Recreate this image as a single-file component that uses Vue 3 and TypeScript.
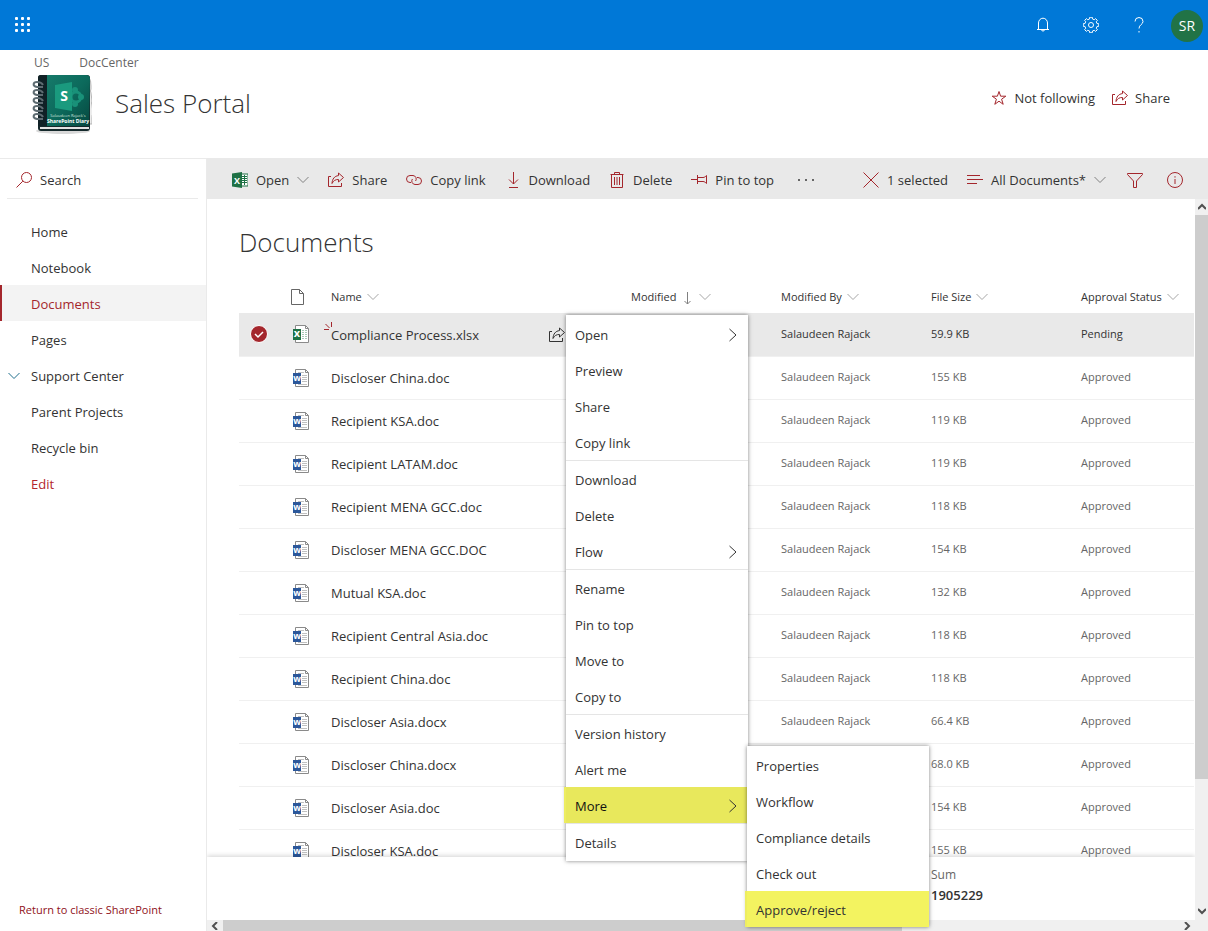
<script setup lang="ts">
import { ref } from 'vue'

interface DocRow {
  name: string
  kind: 'xls' | 'doc'
  author: string
  size: string
  status: string
  selected?: boolean
}

interface MenuItem {
  label: string
  submenu?: boolean
  marked?: boolean
}

interface Command {
  label: string
  icon: string
}

const icons: Record<string, string> = {
  share: 'M10.5 1L15.5 5.5L10.5 10V7.5C7.5 7.4 5.5 8.5 4 11.5C4.2 7 6.5 4 10.5 3.6ZM3 4.5H.5V14.5H13.5V11',
  link: 'M5 10.5H4A3.5 3.5 0 0 1 4 3.5H7A3.5 3.5 0 0 1 9.6 9M11 5.5H12A3.5 3.5 0 0 1 12 12.5H9A3.5 3.5 0 0 1 6.4 7',
  download: 'M8.5 0V12M4 7.5L8.5 12L13 7.5M4 15.5H13',
  trash: 'M1.5 2.5H14.5M5.5 2.5V.5H10.5V2.5M2.5 2.5V15.5H13.5V2.5M5.5 5V13M8 5V13M10.5 5V13',
  pin: 'M0 7.5H6M6.5 3V12M6.5 5.5H12C13.5 5.5 14.5 4.5 15.5 3.5V11.5C14.5 10.5 13.5 9.5 12 9.5H6.5',
  close: 'M.5 .5L15.5 15.5M15.5 .5L.5 15.5',
  list: 'M0 3.5H13M0 7.5H16M0 11.5H10',
  filter: 'M.5 1.5H15.5V2.5L9.5 9V15.5H6.5V9L.5 2.5Z',
  info: 'M8 .5A7.5 7.5 0 1 1 8 15.5A7.5 7.5 0 1 1 8 .5ZM8 7V12M8 4.2V5.6',
  star: 'M8 1.5L9.6 6.2H14.8L10.6 9.2L12.2 14.3L8 11.2L3.8 14.3L5.4 9.2L1.2 6.2H6.4Z',
  search: 'M10.5 .5A5 5 0 1 1 10.5 10.5A5 5 0 1 1 10.5 .5ZM6.8 9.2L.5 15.5',
  bell: 'M2 12.5H14M3.5 12.5V6A4.5 4.8 0 0 1 12.5 6V12.5M6.3 12.8A1.8 1.8 0 0 0 9.7 12.8',
  help: 'M4 4.5A4 4 0 0 1 12 4.5C12 7.5 8 7.6 8 11.5M8 14V15.5',
  file: 'M.5 .5H8.5L12.5 4.5V15.5H.5ZM8.5 .5V4.5H12.5',
  sort: 'M4.5 1V13M1.5 10L4.5 13L7.5 10',
}

function gearPath(teeth: number, outer: number, inner: number): string {
  const points: string[] = []
  const step = (Math.PI * 2) / teeth
  for (let i = 0; i < teeth; i++) {
    const corners: [number, number][] = [[-0.3, inner], [-0.2, outer], [0.2, outer], [0.3, inner]]
    for (const [offset, radius] of corners) {
      const angle = (i + offset) * step
      points.push(`${(8 + radius * Math.cos(angle)).toFixed(2)} ${(8 + radius * Math.sin(angle)).toFixed(2)}`)
    }
  }
  return `M${points.join('L')}Z`
}
icons.gear = gearPath(8, 7.9, 6.2) + 'M8 5.5A2.5 2.5 0 1 1 8 10.5A2.5 2.5 0 1 1 8 5.5Z'

const commands: Command[] = [
  { label: 'Share', icon: 'share' },
  { label: 'Copy link', icon: 'link' },
  { label: 'Download', icon: 'download' },
  { label: 'Delete', icon: 'trash' },
  { label: 'Pin to top', icon: 'pin' },
]

const navItems = ['Home', 'Notebook', 'Documents', 'Pages', 'Support Center', 'Parent Projects', 'Recycle bin', 'Edit']

const author = 'Salaudeen Rajack'
const rows = ref<DocRow[]>([
  { name: 'Compliance Process.xlsx', kind: 'xls', author, size: '59.9 KB', status: 'Pending', selected: true },
  { name: 'Discloser China.doc', kind: 'doc', author, size: '155 KB', status: 'Approved' },
  { name: 'Recipient KSA.doc', kind: 'doc', author, size: '119 KB', status: 'Approved' },
  { name: 'Recipient LATAM.doc', kind: 'doc', author, size: '119 KB', status: 'Approved' },
  { name: 'Recipient MENA GCC.doc', kind: 'doc', author, size: '118 KB', status: 'Approved' },
  { name: 'Discloser MENA GCC.DOC', kind: 'doc', author, size: '154 KB', status: 'Approved' },
  { name: 'Mutual KSA.doc', kind: 'doc', author, size: '132 KB', status: 'Approved' },
  { name: 'Recipient Central Asia.doc', kind: 'doc', author, size: '118 KB', status: 'Approved' },
  { name: 'Recipient China.doc', kind: 'doc', author, size: '118 KB', status: 'Approved' },
  { name: 'Discloser Asia.docx', kind: 'doc', author, size: '66.4 KB', status: 'Approved' },
  { name: 'Discloser China.docx', kind: 'doc', author, size: '68.0 KB', status: 'Approved' },
  { name: 'Discloser Asia.doc', kind: 'doc', author, size: '154 KB', status: 'Approved' },
  { name: 'Discloser KSA.doc', kind: 'doc', author, size: '155 KB', status: 'Approved' },
])

const menuGroups: MenuItem[][] = [
  [{ label: 'Open', submenu: true }, { label: 'Preview' }, { label: 'Share' }, { label: 'Copy link' }],
  [{ label: 'Download' }, { label: 'Delete' }, { label: 'Flow', submenu: true }],
  [{ label: 'Rename' }, { label: 'Pin to top' }, { label: 'Move to' }, { label: 'Copy to' }],
  [{ label: 'Version history' }, { label: 'Alert me' }, { label: 'More', submenu: true, marked: true }],
  [{ label: 'Details' }],
]

const submenu: MenuItem[] = [
  { label: 'Properties' },
  { label: 'Workflow' },
  { label: 'Compliance details' },
  { label: 'Check out' },
  { label: 'Approve/reject', marked: true },
]

const query = ref('')
</script>

<template>
  <div class="page">
    <header class="suite">
      <button class="suite-btn" aria-label="App launcher">
        <svg class="icon" viewBox="0 0 16 16">
          <g fill="currentColor" stroke="none">
            <template v-for="y in 3" :key="y">
              <rect v-for="x in 3" :key="x" :x="x * 6 - 6" :y="y * 6 - 6" width="3" height="3" rx="1" />
            </template>
          </g>
        </svg>
      </button>
      <span class="spacer"></span>
      <button v-for="name in ['bell', 'gear', 'help']" :key="name" class="suite-btn tool" :aria-label="name">
        <svg class="icon" viewBox="0 0 16 16"><path :d="icons[name]" /></svg>
      </button>
      <button class="avatar" aria-label="Account">SR</button>
    </header>

    <section class="site">
      <nav class="crumbs"><a href="#">US</a><a href="#">DocCenter</a></nav>
      <div class="site-row">
        <svg class="logo" viewBox="0 0 60 62" role="img" aria-label="Site logo">
          <defs>
            <linearGradient id="cover" x1="0" y1="0" x2="1" y2="1">
              <stop offset="0" stop-color="#167a6a" />
              <stop offset=".5" stop-color="#0c6a5c" />
              <stop offset="1" stop-color="#06473f" />
            </linearGradient>
          </defs>
          <ellipse cx="31" cy="58" rx="27" ry="3" fill="#d8d8d8" />
          <path d="M54 5h3q2 1 2 8v3q-1 2 0 4l1 8q-1 2 0 4l1 8q-1 2-1 5v6h-6z" fill="#ececec" stroke="#b5b5b5" />
          <rect x="6" y="2" width="52" height="56" rx="3" fill="#15292c" />
          <path d="M8 54h49v2H8z" fill="#e3e3e3" />
          <path d="M15 2h39q4 0 4 4l-1 47H15z" fill="url(#cover)" />
          <path d="M6 5q0-3 3-3h6v51H6z" fill="#102126" />
          <circle cx="44" cy="24" r="5" fill="none" stroke="#199179" stroke-width="3" />
          <circle cx="43" cy="17" r="3" fill="#199179" />
          <circle cx="49" cy="24" r="3" fill="#199179" />
          <circle cx="43" cy="31" r="3" fill="#199179" />
          <path d="M23 12l17-3v29l-17-3z" fill="#1a9a7e" />
          <text x="32" y="28" text-anchor="middle" class="logo-letter">S</text>
          <text x="36" y="44" text-anchor="middle" class="logo-small">Salaudeen Rajack's</text>
          <text x="36" y="50" text-anchor="middle" class="logo-name">SharePoint Diary</text>
          <g fill="none" stroke="#5e6c72" stroke-width="2">
            <path v-for="n in 5" :key="n" :d="`M11 ${n * 8 + 6}H5C0 ${n * 8 + 5} 1 ${n * 8 + 1} 5 ${n * 8 + 1}C8 ${n * 8 + 1} 10 ${n * 8 + 2} 11 ${n * 8 + 4}`" />
          </g>
        </svg>
        <h1 class="title site-title">Sales Portal</h1>
        <span class="spacer"></span>
        <button class="site-btn"><svg class="icon red" viewBox="0 0 16 16"><path :d="icons.star" /></svg>Not following</button>
        <button class="site-btn"><svg class="icon red" viewBox="0 0 16 16"><path :d="icons.share" /></svg>Share</button>
      </div>
    </section>

    <div class="body">
      <aside class="side">
        <label class="search">
          <svg class="icon red" viewBox="0 0 16 16"><path :d="icons.search" /></svg>
          <input v-model="query" type="text" placeholder="Search" aria-label="Search" />
        </label>
        <nav class="nav">
          <a
            v-for="item in navItems"
            :key="item"
            href="#"
            :class="['nav-item', { current: item === 'Documents', edit: item === 'Edit' }]"
          >
            <span class="nav-mark">
              <svg v-if="item === 'Support Center'" class="chev" viewBox="0 0 12 8"><path d="M.5 1L6 6.5L11.5 1" /></svg>
            </span>
            {{ item }}
          </a>
        </nav>
        <a class="classic" href="#">Return to classic SharePoint</a>
      </aside>

      <main class="main">
        <div class="bar">
          <button class="cmd">
            <svg class="icon app" viewBox="0 0 16 16">
              <rect x="8" y="2" width="8" height="12" fill="#fff" stroke="#1e7145" />
              <path d="M10 4.5h5M10 6.5h5M10 8.5h5M10 10.5h5M12.5 3v10" stroke="#1e7145" />
              <path d="M0 1.5L10 0v16L0 14.5z" fill="#1e7145" stroke="none" />
              <text x="5" y="12" text-anchor="middle" class="app-letter">X</text>
            </svg>
            Open
            <svg class="chev" viewBox="0 0 12 8"><path d="M.5 1L6 6.5L11.5 1" /></svg>
          </button>
          <button v-for="cmd in commands" :key="cmd.label" class="cmd">
            <svg class="icon red" viewBox="0 0 16 16"><path :d="icons[cmd.icon]" /></svg>{{ cmd.label }}
          </button>
          <button class="cmd wide" aria-label="More commands">
            <svg class="icon dots" viewBox="0 0 16 16"><path d="M0 7h2v2H0zM7 7h2v2H7zM14 7h2v2h-2z" /></svg>
          </button>
          <span class="spacer"></span>
          <button class="cmd"><svg class="icon red" viewBox="0 0 16 16"><path :d="icons.close" /></svg>1 selected</button>
          <button class="cmd">
            <svg class="icon red" viewBox="0 0 16 16"><path :d="icons.list" /></svg>All Documents*
            <svg class="chev" viewBox="0 0 12 8"><path d="M.5 1L6 6.5L11.5 1" /></svg>
          </button>
          <button class="cmd filter" aria-label="Filter"><svg class="icon red" viewBox="0 0 16 16"><path :d="icons.filter" /></svg></button>
          <button class="cmd wide" aria-label="Details pane"><svg class="icon red" viewBox="0 0 16 16"><path :d="icons.info" /></svg></button>
        </div>

        <div class="content">
          <div class="pane">
            <div class="list">
              <h2 class="title list-title">Documents</h2>
              <table class="docs">
                <colgroup>
                  <col class="c-check" /><col class="c-icon" /><col class="c-name" /><col class="c-mid" /><col class="c-mid" /><col class="c-mid" /><col />
                </colgroup>
                <thead>
                  <tr>
                    <th></th>
                    <th><svg class="icon type" viewBox="0 0 16 16"><path :d="icons.file" /></svg></th>
                    <th>Name<svg class="chev" viewBox="0 0 12 8"><path d="M.5 1L6 6.5L11.5 1" /></svg></th>
                    <th>
                      Modified<svg class="sort" viewBox="0 0 9 14"><path :d="icons.sort" /></svg><svg class="chev" viewBox="0 0 12 8"><path d="M.5 1L6 6.5L11.5 1" /></svg>
                    </th>
                    <th>Modified By<svg class="chev" viewBox="0 0 12 8"><path d="M.5 1L6 6.5L11.5 1" /></svg></th>
                    <th>File Size<svg class="chev" viewBox="0 0 12 8"><path d="M.5 1L6 6.5L11.5 1" /></svg></th>
                    <th>Approval Status<svg class="chev" viewBox="0 0 12 8"><path d="M.5 1L6 6.5L11.5 1" /></svg></th>
                  </tr>
                </thead>
                <tbody>
                  <tr v-for="row in rows" :key="row.name" :class="{ selected: row.selected }">
                    <td class="check">
                      <svg v-if="row.selected" class="tick" viewBox="0 0 18 18" role="img" aria-label="Selected">
                        <circle cx="9" cy="9" r="8.5" fill="#a4262c" stroke="#fff" />
                        <path d="M5 9l3 3l5-5" fill="none" stroke="#fff" stroke-width="1.5" />
                      </svg>
                    </td>
                    <td>
                      <svg class="filetype" viewBox="0 0 16 18">
                        <path d="M2.5 .5H12.5L15.5 3.5V17.5H2.5Z" fill="#fff" stroke="#8a8a8a" />
                        <path d="M12.5 .5V3.5H15.5" fill="none" stroke="#8a8a8a" />
                        <template v-if="row.kind === 'doc'">
                          <path d="M5 3.5h6M9 6.5h5M9 8.5h5M9 10.5h5M9 12.5h5M5 15.5h9" stroke="#c0c0c0" />
                          <path d="M0 4h8v11H0z" fill="#2b579a" />
                        </template>
                        <template v-else>
                          <path d="M9 5.5h2m1 0h2M9 7.5h2m1 0h2M9 9.5h2m1 0h2M9 11.5h2m1 0h2M9 13.5h2m1 0h2" stroke="#a6c9b5" />
                          <path d="M0 4h8v11H0z" fill="#1e7145" />
                        </template>
                        <text x="4" y="12" text-anchor="middle" :class="['type-letter', row.kind]">{{ row.kind === 'doc' ? 'w' : 'x' }}</text>
                      </svg>
                    </td>
                    <td>
                      <div class="name-cell">
                        <svg v-if="row.selected" class="spark" viewBox="0 0 8 8"><path d="M0 7.5H5M1.5 2L5.5 6M7.5 0V5" /></svg>
                        <a href="#" class="name">{{ row.name }}</a>
                        <svg v-if="row.selected" class="icon share" viewBox="0 0 16 16"><path :d="icons.share" /></svg>
                      </div>
                    </td>
                    <td></td>
                    <td class="meta">{{ row.author }}</td>
                    <td class="meta">{{ row.size }}</td>
                    <td class="meta">{{ row.status }}</td>
                  </tr>
                </tbody>
              </table>
            </div>
            <div class="totals">
              <div class="sum"><span class="sum-label">Sum</span><strong>1905229</strong></div>
            </div>
            <div class="hscroll">
              <svg class="arrow" viewBox="0 0 8 8"><path d="M6 0L2 4L6 8" /></svg>
              <div class="track"><div class="hthumb"></div></div>
              <svg class="arrow" viewBox="0 0 8 8"><path d="M2 0L6 4L2 8" /></svg>
            </div>
          </div>
          <div class="vscroll">
            <svg class="arrow" viewBox="0 0 8 8"><path d="M0 6L4 2L8 6" /></svg>
            <div class="track"><div class="vthumb"></div></div>
            <svg class="arrow" viewBox="0 0 8 8"><path d="M0 2L4 6L8 2" /></svg>
          </div>

          <div class="menu context">
            <div v-for="(group, g) in menuGroups" :key="g" class="group">
              <button v-for="item in group" :key="item.label" :class="['item', { more: item.marked }]">
                {{ item.label }}
                <svg v-if="item.submenu" class="next" viewBox="0 0 8 14"><path d="M.5 1L7 7L.5 13" /></svg>
              </button>
            </div>
            <div class="menu flyout">
              <button v-for="item in submenu" :key="item.label" :class="['item', { approve: item.marked }]">{{ item.label }}</button>
            </div>
          </div>
        </div>
      </main>
    </div>
  </div>
</template>

<style>
html,
body {
  margin: 0;
  background: #fff;
}
</style>

<style scoped>
.page {
  display: flex;
  flex-direction: column;
  height: 100vh;
  overflow: hidden;
  font-family: 'Open Sans', 'Noto Sans', sans-serif;
  font-size: 13px;
  line-height: 20px;
  color: #333;
}
* {
  box-sizing: border-box;
}
button {
  font: inherit;
  color: inherit;
  background: none;
  border: 0;
  padding: 0;
  display: flex;
  align-items: center;
}
a {
  color: inherit;
  text-decoration: none;
}
svg {
  flex: none;
}
.icon {
  width: 16px;
  height: 16px;
  fill: none;
  stroke: currentColor;
}
.red {
  color: #a4262c;
}
.spacer {
  flex: 1;
}
.chev {
  width: 12px;
  height: 8px;
  fill: none;
  stroke: #808080;
}
.suite {
  flex: none;
  display: flex;
  align-items: center;
  height: 50px;
  background: #0078d7;
  color: #fff;
}
.suite-btn {
  width: 48px;
  height: 50px;
  padding-left: 15px;
}
.tool {
  padding-left: 16px;
}
.avatar {
  width: 32px;
  height: 32px;
  margin: 2px 5px 0 8px;
  border-radius: 50%;
  justify-content: center;
  background: #217346;
  font-size: 14px;
}
.site {
  flex: none;
  height: 108px;
  padding: 3px 38px 0 32px;
}
.crumbs {
  display: flex;
  gap: 30px;
  padding-left: 2px;
  font-size: 12px;
  color: #666;
}
.site-row {
  display: flex;
  align-items: center;
  height: 62px;
}
.logo {
  width: 60px;
  height: 62px;
  margin-right: 23px;
}
.logo-letter {
  font: bold 14px 'Open Sans', sans-serif;
  fill: #fff;
}
.logo-small {
  font: 4px 'Open Sans', sans-serif;
  fill: #cde3de;
}
.logo-name {
  font: bold 5px 'Open Sans', sans-serif;
  fill: #fff;
}
.title {
  margin: 0;
  font-size: 26px;
  line-height: 36px;
  font-weight: 300;
}
.site-title {
  margin-bottom: 2px;
}
.site-btn {
  gap: 7px;
  margin: 0 0 12px 17px;
}
.body {
  flex: 1;
  min-height: 0;
  display: flex;
}
.side {
  flex: none;
  width: 207px;
  display: flex;
  flex-direction: column;
  border: solid #eaeaea;
  border-width: 1px 1px 0 0;
}
.search {
  display: flex;
  align-items: center;
  gap: 8px;
  height: 40px;
  margin: 0 8px 14px 7px;
  padding: 2px 0 0 9px;
  border-bottom: 1px solid #eaeaea;
}
.search input {
  width: 100%;
  min-width: 0;
  padding: 0;
  border: 0;
  outline: 0;
  font: inherit;
  color: inherit;
}
.search input::placeholder {
  color: #333;
  opacity: 1;
}
.nav-item {
  display: flex;
  align-items: center;
  height: 36px;
  padding-top: 1px;
}
.nav-mark {
  width: 31px;
  padding-left: 8px;
  display: flex;
}
.nav-mark .chev {
  stroke: #1e6f8c;
}
.current {
  background: #f3f3f3;
  box-shadow: inset 2px 0 #a4262c;
  color: #a4262c;
}
.edit {
  color: #b3262c;
}
.classic {
  margin: auto 0 11px 19px;
  font-size: 11px;
  color: #8f1020;
}
.main {
  flex: 1;
  min-width: 0;
  display: flex;
  flex-direction: column;
}
.bar {
  flex: none;
  display: flex;
  align-items: center;
  gap: 18px;
  height: 41px;
  padding: 2px 25px 0 25px;
  background: #e9e9e9;
  white-space: nowrap;
}
.cmd {
  gap: 8px;
}
.cmd + .cmd {
  margin-left: 1px;
}
.cmd + .wide {
  margin-left: 6px;
}
.cmd + .filter {
  margin-left: 3px;
}
.dots path {
  fill: #666;
  stroke: none;
}
.app-letter {
  font: bold 9px 'Open Sans', sans-serif;
  fill: #fff;
  stroke: none;
}
.content {
  position: relative;
  flex: 1;
  min-height: 0;
  display: flex;
}
.pane {
  flex: 1;
  min-width: 0;
  display: flex;
  flex-direction: column;
}
.list {
  flex: 1;
  min-height: 0;
  overflow: hidden;
  padding: 25px 1px 0 32px;
}
.list-title {
  margin-bottom: 20px;
}
.docs {
  width: 100%;
  table-layout: fixed;
  border-collapse: collapse;
}
.c-check {
  width: 52px;
}
.c-icon {
  width: 40px;
}
.c-name {
  width: 300px;
}
.c-mid {
  width: 150px;
}
th,
td {
  padding: 0;
  text-align: left;
  white-space: nowrap;
}
th {
  height: 33px;
  font-size: 11px;
  font-weight: 400;
}
th .chev {
  margin-left: 5px;
  stroke: #a6a6a6;
}
.sort {
  width: 9px;
  height: 14px;
  margin: 0 2px 0 7px;
  vertical-align: middle;
  fill: none;
  stroke: #808080;
}
.type {
  display: block;
  stroke: #666;
}
tbody tr {
  height: 43px;
  border-bottom: 1px solid #f0f0f0;
}
.selected {
  background: #e9e9e9;
}
.check {
  padding-left: 11px;
}
.tick {
  display: block;
  width: 18px;
  height: 18px;
}
.filetype {
  display: block;
  width: 16px;
  height: 18px;
  margin-left: 2px;
}
.type-letter {
  font: bold 9px 'Open Sans', sans-serif;
  fill: #fff;
}
.xls {
  font-size: 11px;
}
.name-cell {
  position: relative;
  display: flex;
  align-items: center;
  padding-top: 1px;
}
.share {
  margin-left: auto;
  margin-right: 66px;
}
.spark {
  position: absolute;
  left: -7px;
  top: -2px;
  width: 8px;
  height: 8px;
  fill: none;
  stroke: #a4262c;
}
.meta {
  padding-bottom: 2px;
  font-size: 11px;
  color: #666;
}
.selected .meta {
  padding-bottom: 0;
  color: #333;
}
.totals {
  flex: none;
  height: 63px;
  padding: 8px 1px 0 32px;
  background: #fff;
  box-shadow: 0 -1px 5px rgba(0, 0, 0, 0.18);
  clip-path: inset(-8px 0 0 0);
}
.sum {
  display: flex;
  flex-direction: column;
  margin-left: 692px;
}
.sum-label {
  font-size: 12px;
  color: #666;
}
.sum strong {
  font-weight: 600;
}
.hscroll {
  flex: none;
  display: flex;
  align-items: center;
  height: 11px;
  background: #f0f0f0;
}
.arrow {
  width: 8px;
  height: 8px;
  margin: 4px;
  fill: none;
  stroke: #505050;
  stroke-width: 2;
}
.track {
  flex: 1;
  align-self: stretch;
}
.hthumb {
  width: 71%;
  height: 100%;
  background: #cdcdcd;
}
.vscroll {
  flex: none;
  display: flex;
  flex-direction: column;
  align-items: center;
  width: 13px;
  padding-bottom: 12px;
  background: #f0f0f0;
}
.vthumb {
  height: 82%;
  background: #cdcdcd;
}
.menu {
  position: absolute;
  width: 182px;
  padding: 1px 0;
  background: #fff;
  box-shadow: 0 0 4px rgba(0, 0, 0, 0.5);
}
.context {
  left: 359px;
  top: 116px;
}
.flyout {
  left: 181px;
  bottom: -66px;
  padding: 1px 0 0;
}
.group + .group {
  border-top: 1px solid #e5e5e5;
}
.item {
  width: 100%;
  height: 36px;
  padding: 1px 11px 0 9px;
  justify-content: space-between;
}
.next {
  width: 8px;
  height: 14px;
  fill: none;
  stroke: #333;
}
.more,
.approve {
  box-shadow: -2px 0 #eded60;
  background: #f3f360;
}
.more {
  background: #e8e85c;
  color: #111;
}
</style>
